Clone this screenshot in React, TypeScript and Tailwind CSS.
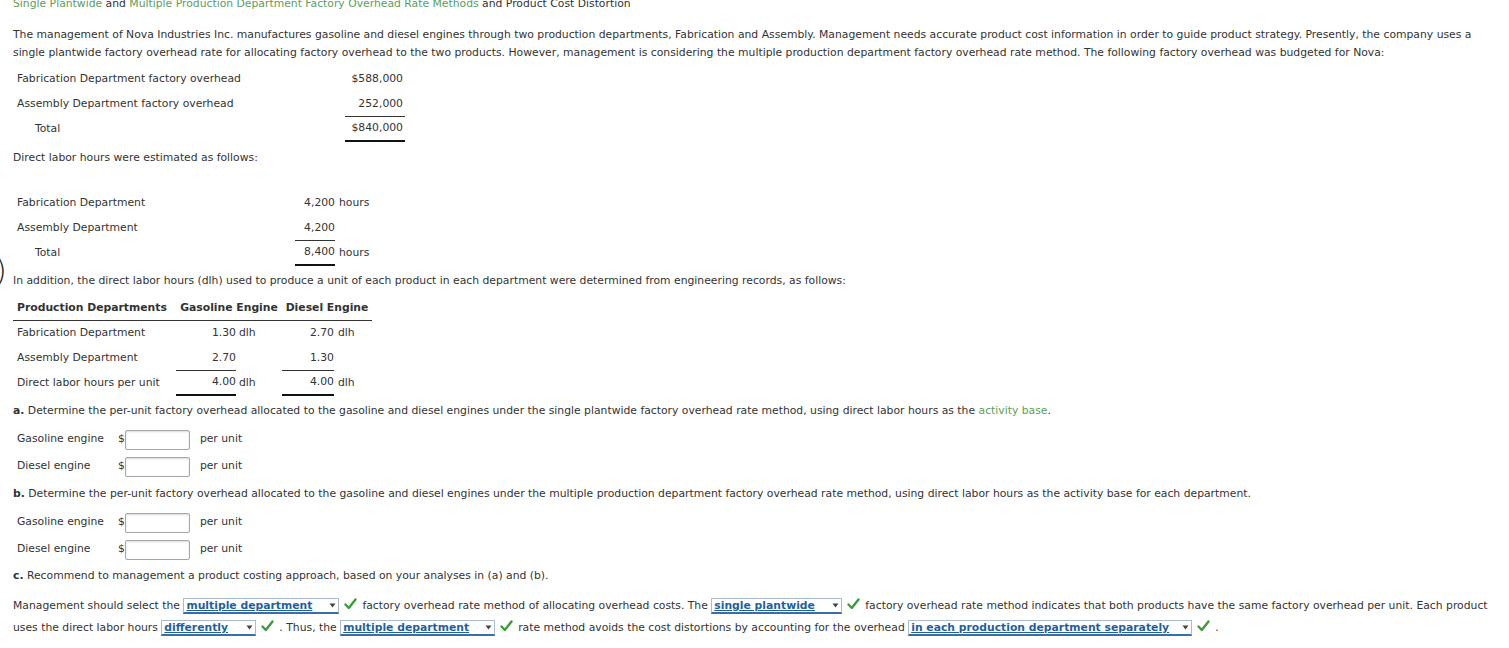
import React from "react";

const green = "text-[#5c9d5c]";

function Check() {
  return (
    <svg width="13" height="12" viewBox="0 0 13 12" className="inline-block align-[-1px] mx-[5px]">
      <path d="M1.5 6.5 L4.8 10 L11.5 1.5" fill="none" stroke="#3f9a3f" strokeWidth="2.4" strokeLinecap="round" strokeLinejoin="round" />
    </svg>
  );
}

function Pick({ text, w }: { text: string; w: string }) {
  return (
    <span
      className={`inline-flex items-center justify-between h-[16px] align-middle border border-[#a9bcd2] border-b-[2px] border-b-[#3a6ea5] pl-[2px] pr-[2px] ${w}`}
    >
      <span className="font-bold text-[#1f5f9e] underline leading-[13px]">{text}</span>
      <svg width="7" height="5" viewBox="0 0 7 5">
        <path d="M0.5 0.5 H6.5 L3.5 4.5 Z" fill="#444" />
      </svg>
    </span>
  );
}

function AmountRow({ label }: { label: string }) {
  return (
    <div className="flex items-center h-[27px] pl-1">
      <div className="w-[101px]">{label}</div>
      <span>$</span>
      <span className="w-[65px] h-[20px] rounded-[2px] border border-[#a7a7a7] shadow-[inset_0_1px_2px_rgba(0,0,0,0.15)] bg-white" />
      <span className="ml-[10px]">per unit</span>
    </div>
  );
}

export default function App() {
  return (
    <div
      className="w-[1509px] h-[648px] overflow-hidden bg-white text-[#333] text-[10.8px] px-[13px] relative"
      style={{ fontFamily: "'DejaVu Sans', Verdana, sans-serif" }}
    >
      <div className="-mt-[3px] leading-[14px]">
        <span className={green}>Single Plantwide</span> and{" "}
        <span className={green}>Multiple Production Department Factory Overhead Rate Methods</span> and Product Cost Distortion
      </div>

      <p className="mt-[15px] leading-[18px]">
        The management of Nova Industries Inc. manufactures gasoline and diesel engines through two production departments, Fabrication and Assembly. Management needs accurate product cost information in order to guide product strategy. Presently, the company uses a single plantwide factory overhead rate for allocating factory overhead to the two products. However, management is considering the multiple production department factory overhead rate method. The following factory overhead was budgeted for Nova:
      </p>

      {/* overhead table */}
      <div className="mt-[5px] grid grid-cols-[332px_60px] w-max">
        <div className="h-[25px] flex items-center pl-1">Fabrication Department factory overhead</div>
        <div className="h-[25px] flex items-center justify-end pr-[2px]">$588,000</div>
        <div className="h-[25px] flex items-center pl-1">Assembly Department factory overhead</div>
        <div className="h-[25px] flex items-center justify-end pr-[2px] border-b border-[#333]">252,000</div>
        <div className="h-[25px] flex items-center pl-[22px]">Total</div>
        <div className="h-[25px] flex items-center justify-end pr-[2px] border-b-[2px] border-[#111]">$840,000</div>
      </div>

      <div className="mt-[7px] leading-[18px]">Direct labor hours were estimated as follows:</div>

      {/* hours table */}
      <div className="mt-[24px] grid grid-cols-[282px_40px_40px] w-max">
        <div className="h-[25px] flex items-center pl-1">Fabrication Department</div>
        <div className="h-[25px] flex items-center justify-end">4,200</div>
        <div className="h-[25px] flex items-center pl-[4px]">hours</div>
        <div className="h-[25px] flex items-center pl-1">Assembly Department</div>
        <div className="h-[25px] flex items-center justify-end border-b border-[#333]">4,200</div>
        <div className="h-[25px]" />
        <div className="h-[25px] flex items-center pl-[22px]">Total</div>
        <div className="h-[25px] flex items-center justify-end border-b-[2px] border-[#111]">8,400</div>
        <div className="h-[25px] flex items-center pl-[4px]">hours</div>
      </div>

      <span className="absolute left-[-5px] top-[254px] text-[30px] leading-[34px] font-light text-[#222]">)</span>

      <div className="mt-[6px] leading-[18px]">
        In addition, the direct labor hours (dlh) used to produce a unit of each product in each department were determined from engineering records, as follows:
      </div>

      {/* dlh table */}
      <div className="mt-[6px] grid grid-cols-[163px_60px_46px_52px_38px] w-max">
        <div className="h-[25px] flex items-center pl-1 font-bold border-b border-[#333]">Production Departments</div>
        <div className="col-span-2 h-[25px] flex items-center justify-center font-bold border-b border-[#333]">Gasoline Engine</div>
        <div className="col-span-2 h-[25px] flex items-center justify-center font-bold border-b border-[#333]">Diesel Engine</div>

        <div className="h-[25px] flex items-center pl-1">Fabrication Department</div>
        <div className="h-[25px] flex items-center justify-end">1.30</div>
        <div className="h-[25px] flex items-center pl-[3px]">dlh</div>
        <div className="h-[25px] flex items-center justify-end">2.70</div>
        <div className="h-[25px] flex items-center pl-[4px]">dlh</div>

        <div className="h-[25px] flex items-center pl-1">Assembly Department</div>
        <div className="h-[25px] flex items-center justify-end border-b border-[#333]">2.70</div>
        <div className="h-[25px]" />
        <div className="h-[25px] flex items-center justify-end border-b border-[#333]">1.30</div>
        <div className="h-[25px]" />

        <div className="h-[25px] flex items-center pl-1">Direct labor hours per unit</div>
        <div className="h-[25px] flex items-center justify-end border-b-[2px] border-[#111]">4.00</div>
        <div className="h-[25px] flex items-center pl-[3px]">dlh</div>
        <div className="h-[25px] flex items-center justify-end border-b-[2px] border-[#111]">4.00</div>
        <div className="h-[25px] flex items-center pl-[4px]">dlh</div>
      </div>

      <div className="mt-[6px] leading-[18px]">
        <b>a.</b> Determine the per-unit factory overhead allocated to the gasoline and diesel engines under the single plantwide factory overhead rate method, using direct labor hours as the{" "}
        <span className={green}>activity base</span>.
      </div>
      <div className="mt-[6px]">
        <AmountRow label="Gasoline engine" />
        <AmountRow label="Diesel engine" />
      </div>

      <div className="mt-[5px] leading-[18px]">
        <b>b.</b> Determine the per-unit factory overhead allocated to the gasoline and diesel engines under the multiple production department factory overhead rate method, using direct labor hours as the activity base for each department.
      </div>
      <div className="mt-[6px]">
        <AmountRow label="Gasoline engine" />
        <AmountRow label="Diesel engine" />
      </div>

      <div className="mt-[4px] leading-[18px]">
        <b>c.</b> Recommend to management a product costing approach, based on your analyses in (a) and (b).
      </div>

      <p className="mt-[10px] leading-[22px]">
        Management should select the <Pick text="multiple department" w="w-[156px]" />
        <Check />
        factory overhead rate method of allocating overhead costs. The <Pick text="single plantwide" w="w-[131px]" />
        <Check />
        factory overhead rate method indicates that both products have the same factory overhead per unit. Each product uses the direct labor hours{" "}
        <Pick text="differently" w="w-[95px]" />
        <Check />. Thus, the <Pick text="multiple department" w="w-[155px]" />
        <Check />
        rate method avoids the cost distortions by accounting for the overhead{" "}
        <Pick text="in each production department separately" w="w-[284px]" />
        <Check />.
      </p>
    </div>
  );
}
